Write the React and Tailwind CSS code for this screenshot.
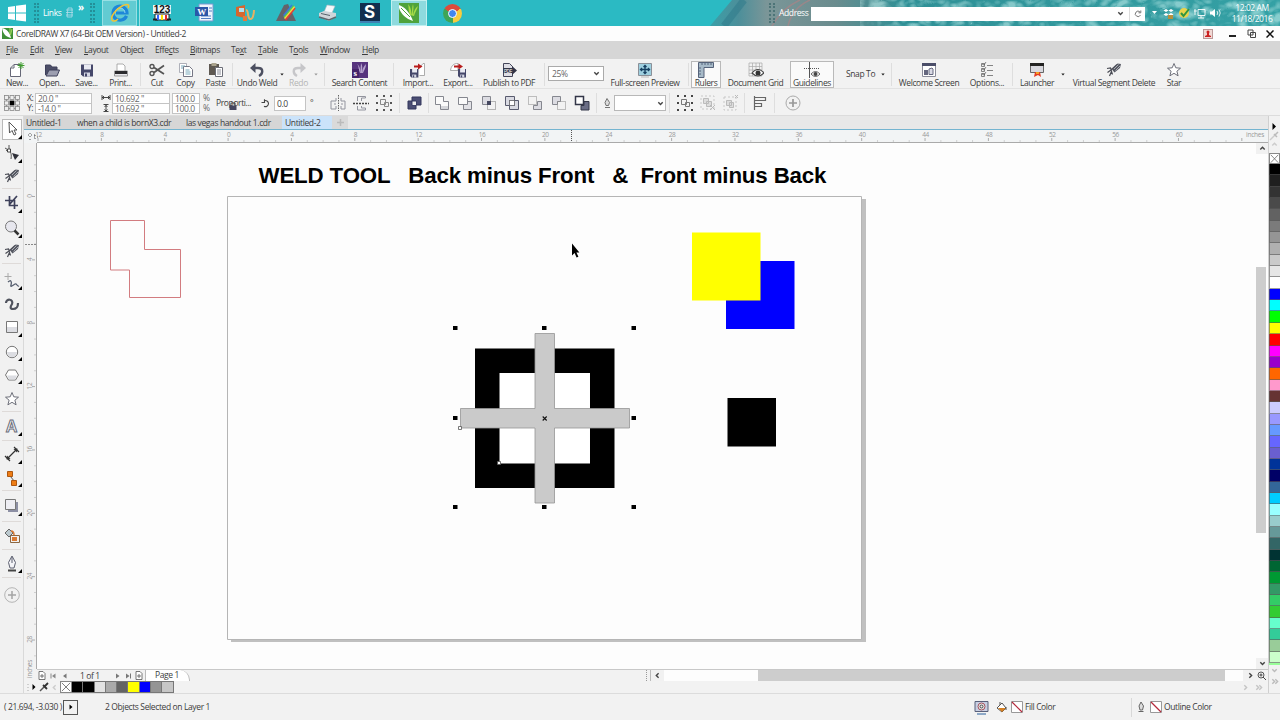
import React from "react";

const PALETTE = [
  "#000000", "#1f1f1f", "#333333", "#4a4a4a", "#626262", "#7b7b7b", "#959595", "#b0b0b0", "#cacaca", "#e6e6e6",
  "#ffffff", "#0000ff", "#00ffff", "#00ff00", "#ffff00", "#ff0000", "#ff00ff", "#9900cc", "#ff6600", "#ff99cc",
  "#663333", "#ccccff", "#9999ff", "#6699ff", "#6666ff", "#6a5fd0", "#003399", "#000066", "#336699", "#00ccff",
  "#99ffff", "#99cccc", "#669999", "#336666", "#003333", "#006633", "#009933", "#339966", "#33cc66", "#33cc33",
  "#66ffcc", "#33cc99", "#99cc99", "#ccffcc",
];

const DOC_COLORS = ["#000000", "#000000", "#e2e2e2", "#aaaaaa", "#646464", "#ffff00", "#0000ff", "#949494", "#c6c6c6"];

function Icon({ w = 16, h = 16, children, className = "" }) {
  return (
    <svg width={w} height={h} viewBox={`0 0 ${w} ${h}`} fill="none" className={"shrink-0 block " + className}>
      {children}
    </svg>
  );
}

function Sep({ className = "w-1" }) {
  return (
    <div className={"shrink-0 flex justify-center h-full py-0.5 " + className}>
      <div className="w-px bg-[#dedede]" />
    </div>
  );
}

function Tool({ label, className, active, dim, children }) {
  return (
    <div
      className={
        "shrink-0 h-[27px] flex flex-col items-center whitespace-nowrap " +
        (active ? "bg-[#fafafa] outline outline-[#b9b9b9] -outline-offset-1 " : "") +
        (dim ? "text-[#b4b4b4] " : "") +
        className
      }
    >
      <div className="h-[17px] flex items-center">{children}</div>
      <span className="leading-[10px]">{label}</span>
    </div>
  );
}

function Caret({ className = "w-1", color = "#222" }) {
  return (
    <div className={"shrink-0 flex items-center justify-center h-full " + className}>
      <Icon w={4} h={3}><path d="M.3.500h3.400L2 2.400z" fill={color} /></Icon>
    </div>
  );
}

function Chevron({ dir = "down", color = "#444", size = 7 }) {
  const paths = {
    down: "M1.300 2.300 3.500 4.600 5.700 2.300",
    up: "M1.300 4.600 3.500 2.300 5.700 4.600",
    left: "M4.600 1.300 2.300 3.500 4.600 5.700",
    right: "M2.300 1.300 4.600 3.500 2.300 5.700",
  };
  return (
    <svg width={size} height={size} viewBox="0 0 7 7" fill="none" className="block shrink-0">
      <path d={paths[dir]} stroke={color} strokeWidth="1.400" />
    </svg>
  );
}

const Knife = () => (
  <>
    <path d="M1 6.500 4.500 6l1 2.500M3.500 14l2-4.500 1 3M1.500 10.500 5 8l6-5.500" stroke="#4a4c55" strokeWidth="1.200" />
    <path d="m6 7.500 5.500-6 3.500.5-1 4-5.500 4.500z" fill="#565963" />
    <path d="m8 7 4.500-4.500M9.500 8.500 14 4" stroke="#cfd0d4" strokeWidth=".7" />
  </>
);

const Floppy = ({ x = 0, y = 0, s = 1 }) => (
  <g transform={`translate(${x} ${y}) scale(${s})`}>
    <path d="M0 0h12v12H2L0 10z" fill="#45476a" />
    <path d="M3 0h7v5H3z" fill="#e9eaf2" />
    <path d="M3 8h6v4H3z" fill="#d5d7e4" />
    <path d="M4 9h2v3H4z" fill="#45476a" />
  </g>
);

const Star = () => <path d="m8 1.500 1.800 4.300 4.700.4-3.600 3 1.200 4.600L8 11.300l-4.100 2.500 1.200-4.600-3.600-3 4.700-.4z" fill="#fff" stroke="#5e606b" strokeWidth=".9" />;

function Taskbar() {
  return (
    <div className="relative h-[26px] flex items-center bg-[#2bbac3] text-white overflow-hidden">
      <svg width="580" height="26" className="absolute right-0 top-0" fill="none">
        <defs>
          <linearGradient id="sea" x1="0" x2="1">
            <stop offset="0" stopColor="#3a9fa8" />
            <stop offset=".05" stopColor="#4c8f9a" />
            <stop offset=".1" stopColor="#7b9698" />
            <stop offset=".22" stopColor="#6a8c8e" />
            <stop offset=".34" stopColor="#2f9096" />
            <stop offset="1" stopColor="#34a1a5" />
          </linearGradient>
          <filter id="ripple" x="0" y="0" width="1" height="1">
            <feTurbulence type="turbulence" baseFrequency=".06 .09" numOctaves="2" seed="4" />
            <feColorMatrix values="0 0 0 0 .6  0 0 0 0 .9  0 0 0 0 .88  2.200 0 0 0 -.25" />
          </filter>
        </defs>
        <path d="M32 0h548v26H10z" fill="url(#sea)" />
        <rect x="160" width="420" height="26" filter="url(#ripple)" opacity=".55" />
        <path d="M44 0 24 26" stroke="#2f7a8a" strokeWidth="7" opacity=".55" />
        <path d="M88 26Q92 8 110 0M72 26Q82 8 100 0" stroke="#b87f84" strokeWidth="1.500" opacity=".55" />
      </svg>
      <div className="relative flex items-center h-full w-full">
        <div className="w-[34px] flex justify-center">
          <Icon w={18} h={18}><path d="m0 3 7-1v6.500H0zm8-1.200L18 .5v8H8zM0 9.500h7V16l-7-1zm8 0h10v8L8 16.200z" fill="#fff" /></Icon>
        </div>
        <div className="w-[5px] h-5 border-x-2 border-dotted border-[#238f98]" />
        <span className="ml-[4px] w-[22px]">Links</span>
        <Icon w={10} h={12}><path d="M3 1h4v9H2zM1 3h7M1 5.500h7M1 8h7" stroke="#b5dcea" strokeWidth=".8" /></Icon>
        <span className="ml-[3px] -mt-3 w-[12px] text-[10px] font-bold">»</span>
        <div className="w-[5px] h-5 border-x-2 border-dotted border-[#238f98]" />
        <div className="ml-[7px] w-[35px] h-[26px] bg-[#62cbd2] border border-[#98e0e4] flex items-center justify-center">
          <Icon w={20} h={20}>
            <path d="M16.500 12.800A7 7 0 1 1 17 10H6" stroke="#1e88d8" strokeWidth="3.200" />
            <path d="M5 10a5 5 0 0 1 10 0" stroke="#8ed4f6" />
            <path d="M2 17C0 14 6 6 12 3s8-1 6 2M2 17c1 2 4 1 6-1" stroke="#f3c332" strokeWidth="1.500" />
          </Icon>
        </div>
        <div className="w-[3px] h-[26px] border-r border-[#98e0e4]" />
        <div className="w-[43px] flex justify-center">
          <Icon w={20} h={20}>
            <path d="M1 2h18v9H1z" fill="#e9f4f4" />
            <text x="10" y="10" textAnchor="middle" fontSize="10" fontWeight="bold" fill="#111" letterSpacing="0" fontFamily="Liberation Sans">123</text>
            <path d="M3 11h14v6H3z" fill="#fff" stroke="#222" />
            <path d="M1 15.500h5v2H1zM14 15.500h5v2h-5z" fill="#222" />
            <path d="M5 12h2v5H5z" fill="#3465ff" /><path d="M9 12h2v5H9z" fill="#ffe100" /><path d="M13 12h2v5h-2z" fill="#e02a2a" />
          </Icon>
        </div>
        <div className="w-[41px] flex justify-center">
          <Icon w={20} h={20}>
            <path d="M5 1h14v17H5z" fill="#eef4fc" stroke="#7398cf" />
            <path d="M15 5h3M15 8h3M7 13h10M7 15.500h10" stroke="#5480c4" />
            <path d="M1 4h13v9H1z" fill="#2a57a8" />
            <text x="7.500" y="11.500" textAnchor="middle" fontSize="9" fontWeight="bold" fill="#fff" fontFamily="Liberation Serif">W</text>
          </Icon>
        </div>
        <div className="w-[41px] flex justify-center">
          <Icon w={20} h={18}>
            <path d="M1 3 10 1v13l-9-2z" fill="#d5672e" /><path d="M4 4h5v4H4z" fill="#aee0ee" />
            <path d="M11 6c3 0 1 8 4 9s4-6 4-9" stroke="#e4b064" strokeWidth="2" /><path d="M8 12h4v5H8z" fill="#e57a39" />
          </Icon>
        </div>
        <div className="w-[42px] flex justify-center">
          <Icon w={20} h={20}>
            <path d="M0 18 8 2l4-1 8 17z" fill="#64636a" />
            <path d="m9.500 17 9.500-12" stroke="#e53935" strokeWidth="1.800" /><path d="m8.500 15.500 10-12" stroke="#ffd736" strokeWidth="1.700" />
            <path d="m8 14 9.500-11.500" stroke="#4dc95f" strokeWidth="1.500" /><path d="m7.500 12.500 8.500-10.500" stroke="#3977e0" strokeWidth="1.300" />
          </Icon>
        </div>
        <div className="w-[41px] flex justify-center">
          <Icon w={20} h={18}>
            <path d="m6 8 3-7 8 1-3 7z" fill="#f5f8fa" stroke="#a8b6bd" strokeWidth=".6" />
            <path d="m1 9 5-2 12 2v4l-7 4-10-4z" fill="#cfd6da" /><path d="m1 13 10 3 7-3" stroke="#5d686e" strokeWidth="1.500" />
            <path d="m3 9.500 9 2" stroke="#56636b" />
          </Icon>
        </div>
        <div className="w-[43px] flex justify-center">
          <div className="w-5 h-5 bg-[#122f4f] border-b-2 border-[#3f81b4] flex items-center justify-center text-[17px] leading-none font-bold font-['Inter']">S</div>
        </div>
        <div className="w-[36px] h-[26px] bg-[#8edade] border border-[#c2f0f0] flex items-center justify-center">
          <Icon w={24} h={22}>
            <path d="M2 1h20v20H2z" fill="#4fa33b" />
            <path d="M13 13C11 8 12 4 11 2c3 3 3 7 4 11 0-4 0-8 1-11 1 4 0 7 0 11 1-4 2-7 5-9-1 4-3 6-4 10z" fill="#a8dc45" />
            <path d="M2 3c6 2 11 8 14 16C9 17 4 12 2 6z" fill="#fff" /><path d="m4 6 9 9" stroke="#4fa33b" />
          </Icon>
        </div>
        <div className="w-[50px] flex justify-center">
          <div className="w-[19px] h-[19px] rounded-full flex items-center justify-center bg-[conic-gradient(from_-60deg,#dd4b3b_0_120deg,#f8cc3d_120deg_240deg,#3ea557_240deg)]">
            <div className="w-[9px] h-[9px] rounded-full bg-[#4286ee] border border-white" />
          </div>
        </div>
        <div className="ml-[292px] w-[6px] h-5 border-x-2 border-dotted border-[#4d7477]" />
        <span className="ml-[4px] w-[32px]">Address</span>
        <div className="w-[334px] h-[14px] mt-px bg-white flex items-center">
          <div className="flex-1 flex justify-end pr-[5px]"><Chevron /></div>
          <div className="w-[16px] h-full border-l border-[#ddd] flex items-center justify-center">
            <Icon w={8} h={8}><path d="M6.500 5A2.700 2.700 0 1 1 6 2M6.800.5v2.300H4.500" stroke="#777" /></Icon>
          </div>
        </div>
        <div className="w-[18px] flex justify-center"><Icon w={5} h={4}><path d="M0 0h5L2.500 3z" fill="#fff" /></Icon></div>
        <Icon w={11} h={11}>
          <path d="m3 1 2.500 1.500L3 4 .5 2.500zm5 0 2.500 1.500L8 4 5.500 2.500zM3 5l2.500 1.500L3 8 .5 6.500zm5 0 2.500 1.500L8 8 5.500 6.500z" fill="#fff" />
          <path d="M5 7h5v4H5z" fill="#b5903f" />
        </Icon>
        <Icon w={12} h={12} className="ml-[4px]"><circle cx="6" cy="6" r="5" fill="#e9d34c" /><path d="m3 6 2.500 3L11 2" stroke="#2f9640" strokeWidth="2" /></Icon>
        <Icon w={12} h={11} className="ml-[4px]"><path d="M4 1.500h7v6H4zM1 1v6M0 3h3M7 8v2M4 10h6" stroke="#fff" strokeWidth=".9" /></Icon>
        <Icon w={12} h={10} className="ml-[4px]"><path d="M0 3.500h2L5 1v8L2 6.500H0z" fill="#fff" /><path d="M7 3q1.500 2 0 4M9 1.500q2.500 3.500 0 7" stroke="#fff" strokeWidth=".8" /></Icon>
        <div className="flex-1 flex flex-col items-center leading-[11px] pl-[2px] tracking-[-0.450px] whitespace-nowrap">
          <span>12:02 AM</span>
          <span>11/18/2016</span>
        </div>
      </div>
    </div>
  );
}

function TitleBar() {
  return (
    <div className="h-[15px] bg-[#fdfdfd] flex items-center pl-[2px]">
      <Icon w={11} h={11}><path d="M0 0h11v11H0z" fill="#3f8f37" /><path d="M0 0c5 1 8 5 9 10-5-1-8-4-9-10z" fill="#fff" /><path d="M8 0v6M10 1 8.500 7" stroke="#a3d85d" /></Icon>
      <span className="ml-[3px] whitespace-nowrap">CorelDRAW X7 (64-Bit OEM Version) - Untitled-2</span>
      <div className="ml-auto flex items-center pr-[6px]">
        <div className="w-[10px] h-[10px] bg-[#f1d9d5] border border-[#b99] flex items-center justify-center">
          <Icon w={6} h={7}><circle cx="3" cy="2" r="1.500" fill="#c22" /><path d="M2 3h2v2l2 1v1H0V6l2-1z" fill="#c22" /></Icon>
        </div>
        <div className="ml-[16px] mt-1 w-[7px] h-[2px] bg-[#222]" />
        <Icon w={9} h={9} className="ml-[11px]"><path d="M1 1h5v5H1zM3.500 3.500h5v5h-5z" stroke="#444" fill="#fdfdfd" /></Icon>
        <Icon w={8} h={8} className="ml-[10px]"><path d="m.5.5 7 7m0-7-7 7" stroke="#111" strokeWidth="1.500" /></Icon>
      </div>
    </div>
  );
}

const MENU = [
  ["", "F", "ile", "w-[24px]"],
  ["", "E", "dit", "w-[25px]"],
  ["", "V", "iew", "w-[29px]"],
  ["", "L", "ayout", "w-[36px]"],
  ["Ob", "j", "ect", "w-[35px]"],
  ["Effe", "c", "ts", "w-[35px]"],
  ["", "B", "itmaps", "w-[41px]"],
  ["Te", "x", "t", "w-[27px]"],
  ["", "T", "able", "w-[31px]"],
  ["T", "o", "ols", "w-[31px]"],
  ["", "W", "indow", "w-[42px]"],
  ["", "H", "elp", "w-[30px]"],
];

function MenuBar() {
  return (
    <div className="h-[18px] bg-[#d6d6d6] flex items-center pl-[6px]">
      {MENU.map(([a, b, c, w]) => (
        <span key={a + b + c} className={"shrink-0 whitespace-nowrap " + w}>
          {a}<span className="underline">{b}</span>{c}
        </span>
      ))}
    </div>
  );
}

function StandardBar() {
  return (
    <div className="h-[30px] bg-[#f2f2f2] border-b border-[#e2e2e2] flex pt-[2px]">
      <Tool label="New..." className="w-[34px]">
        <Icon w={18}><path d="M6 2.500 2.500 6v8.500h10V2.500z" fill="#fff" stroke="#666877" /><path d="M3 6h3V2.500" stroke="#666877" /><path d="M13 0v7M9.500 3.500h7M10.500 1l5 5m0-5-5 5" stroke="#3f9e2e" /></Icon>
      </Tool>
      <Tool label="Open..." className="w-[36px]">
        <Icon><path d="M1.500 13V3h5l1.500 2h5v3" fill="#4d4f68" stroke="#3e405b" /><path d="m2 14 3-6h10.500L13 14z" fill="#9c9eb0" stroke="#3e405b" /></Icon>
      </Tool>
      <Tool label="Save..." className="w-[33px]"><Icon><Floppy x={2} y={2.5} /></Icon></Tool>
      <Tool label="Print..." className="w-[35px]">
        <Icon><path d="M4 9V2h6l2 2v5" fill="#fff" stroke="#999" strokeWidth=".8" /><path d="M1.500 9h13v5h-13z" fill="#e6e6ea" stroke="#888" strokeWidth=".8" /><path d="M2 9h12v3H2z" fill="#2a2a2d" /></Icon>
      </Tool>
      <Sep className="w-[5px]" />
      <Tool label="Cut" className="w-[28px]">
        <Icon><circle cx="3" cy="4.500" r="2" stroke="#555" strokeWidth="1.400" /><circle cx="3" cy="11.500" r="2" stroke="#555" strokeWidth="1.400" /><path d="m5 5.500 10 6.500M5 10.500 15 3.500" stroke="#555" strokeWidth="1.700" /></Icon>
      </Tool>
      <Tool label="Copy" className="w-[29px]">
        <Icon><path d="M1.500 1.500h7v9h-7z" fill="#fff" stroke="#9b9da8" strokeWidth=".8" /><path d="M5.500 4.500h6l3 3v7h-9z" fill="#fff" stroke="#666877" strokeWidth=".9" /><path d="M3 4h4M3 6h2M7.500 8h4M7.500 10h5M7.500 12h5" stroke="#79a9bb" /></Icon>
      </Tool>
      <Tool label="Paste" className="w-[31px]">
        <Icon><path d="M1 2h10v11H1z" fill="#5e5851" /><path d="M3.500 1h5v3h-5z" fill="#aaa38d" /><path d="M7.500 5.500h7v9h-7z" fill="#fff" stroke="#6c6e78" /><path d="M9 8h4M9 10h4M9 12h4" stroke="#8b8d98" /></Icon>
      </Tool>
      <Sep className="w-[3px]" />
      <Tool label="Undo Weld" className="w-[46px]">
        <Icon><path d="M4 6h5c6 0 5 6 1 8" stroke="#4c4f60" strokeWidth="2.400" /><path d="m1 6 5.500-5v10z" fill="#4c4f60" /></Icon>
      </Tool>
      <Caret className="w-[4px]" />
      <Tool label="Redo" className="w-[29px]" dim>
        <Icon><path d="M12 6H7c-6 0-5 6-1 8" stroke="#c6c6c9" strokeWidth="2.400" /><path d="m15 6-5.500-5v10z" fill="#c6c6c9" /></Icon>
      </Tool>
      <Caret className="w-[5px]" color="#999" />
      <Sep className="w-[12px]" />
      <Tool label="Search Content" className="w-[59px]">
        <Icon><path d="M0 0h16v16H0z" fill="#57347e" /><path d="M8 11C6 6 7 4 5 2c3 2 3 5 4 9-1-5 0-8 0-10 2 3 1 6 1 10 0-4 2-7 4-9 0 4-2 6-3 9z" fill="#b5a2cd" /><path d="M0 7h7v9H0z" fill="#46246b" /><text x="1.500" y="14" fill="#fff" fontSize="9" fontWeight="bold" fontFamily="Liberation Serif">s</text></Icon>
      </Tool>
      <Sep className="w-[9px]" />
      <Tool label="Import..." className="w-[40px]">
        <Icon><path d="M9.500 6 13 1.500h1.500v12H9.500" fill="#fff" stroke="#999" strokeWidth=".8" /><Floppy x={0} y={7} s={0.7} /><path d="M4 4.500h5" stroke="#b81c1c" strokeWidth="2" /><path d="m8 1.500 4.500 3L8 7.500z" fill="#b81c1c" /></Icon>
      </Tool>
      <Tool label="Export..." className="w-[40px]">
        <Icon><path d="M.5 8.500C1 4 4 1 8 1.500v7z" stroke="#999" strokeWidth=".8" fill="#fff" /><path d="M4 4.500h5" stroke="#b81c1c" strokeWidth="2" /><path d="m8.500 1.500 4.500 3-4.500 3z" fill="#b81c1c" /><Floppy x={8} y={7} s={0.7} /></Icon>
      </Tool>
      <Tool label="Publish to PDF" className="w-[62px]">
        <Icon><path d="M2.500 1.500h6l3 3v10h-9z" fill="#dedee5" stroke="#44465a" /><path d="M2 6h9V4l5 4.500-5 4.500v-2H2z" fill="#333547" /><text x="3" y="10.500" fontSize="4.500" fill="#fff" fontFamily="Liberation Sans">PDF</text></Icon>
      </Tool>
      <Sep className="w-[8px]" />
      <div className="w-[56px] h-[15px] mt-[5px] shrink-0 bg-white border border-[#aaa] flex items-center justify-between px-[3px] text-[#666]">
        <span>25%</span><Chevron />
      </div>
      <Tool label="Full-screen Preview" className="w-[82px]">
        <Icon><path d="M1.500 1.500h13v12h-13z" fill="#9ecfdf" stroke="#8b9098" /><path d="M8 3v9M3.500 7.500h9M6.500 5 8 3.500 9.500 5M6.500 10 8 11.500 9.500 10M5 6 3.500 7.500 5 9M11 6l1.500 1.500L11 9" stroke="#163f60" strokeWidth="1.300" /><path d="M4 15h8" stroke="#bbb" /></Icon>
      </Tool>
      <Sep className="w-[5px]" />
      <Tool label="Rulers" className="w-[30px]" active>
        <Icon><path d="M.5.500h15v5H6v10H.500z" fill="#a7bac8" stroke="#56637a" /><path d="M4 1v2M7 1v2M10 1v2M13 1v2M1 6h2M1 9h2M1 12h2" stroke="#40506a" strokeWidth=".8" /></Icon>
      </Tool>
      <Tool label="Document Grid" className="w-[69px]">
        <Icon><path d="M1 1h13v13H1zM4.500 1v13M8 1v13M11.500 1v13M1 4.500h13M1 8h13M1 11.500h13" stroke="#aaa" strokeWidth=".7" /><path d="M4 11q6-7 12 0-6 6-12 0z" fill="#fff" stroke="#444" strokeWidth="1.100" /><circle cx="10" cy="11" r="2.500" fill="#333" /></Icon>
      </Tool>
      <Tool label="Guidelines" className="w-[44px]" active>
        <Icon><path d="M5.500 0v16" stroke="#555" /><path d="M0 6.500h16" stroke="#555" strokeDasharray="1 1" /><path d="M7 12q4.500-5 9 0-4.500 5-9 0z" fill="#fff" stroke="#555" strokeWidth=".9" /><circle cx="11.500" cy="12" r="2" fill="#444" /></Icon>
      </Tool>
      <div className="w-[56px] shrink-0 flex items-center pl-[12px] pb-px">
        <span className="w-[35px] whitespace-nowrap">Snap To</span><Caret />
      </div>
      <Sep className="w-[2px]" />
      <Tool label="Welcome Screen" className="w-[74px]">
        <Icon><path d="M1.500 1.500h13v13h-13z" fill="#fff" stroke="#8b8d9a" /><path d="M1 1h14v3H1z" fill="#4b4e69" /><path d="M3 8h4v5H3z" fill="#65687f" /><path d="M8 12.500V7q4-2 4 0v5.500z" stroke="#65687f" fill="#d9dae5" /></Icon>
      </Tool>
      <Tool label="Options..." className="w-[42px]">
        <Icon><path d="M2.500 1.500h3v3h-3zM2.500 6.500h3v3h-3zM2.500 11.500h3v3h-3zM8 3.500h6M8 8.500h6M8 13.500h6" stroke="#777" strokeWidth=".9" /><path d="m3 2 2 1 2-3M3 7l2 1 2-3M3 12l2 1 2-3" stroke="#555" strokeWidth=".7" /></Icon>
      </Tool>
      <Sep className="w-[8px]" />
      <Tool label="Launcher" className="w-[42px]">
        <Icon><path d="M1.500 1.500h13v9h-13z" fill="#d8d8de" stroke="#666" /><path d="M1 1h14v3H1z" fill="#222" /><path d="m5 15 1-5h5l1 5-3-2z" fill="#e23c24" /><path d="M7 10h3v2H7z" fill="#f4a021" /></Icon>
      </Tool>
      <Caret className="w-[9px]" />
      <Tool label="Virtual Segment Delete" className="w-[94px]"><Icon><Knife /></Icon></Tool>
      <Tool label="Star" className="w-[26px]"><Icon><Star /></Icon></Tool>
    </div>
  );
}

function Field({ children, className }) {
  return <div className={"h-[11px] bg-white border border-[#c4c4c4] px-[2px] leading-[9px] text-[#666] whitespace-nowrap " + className}>{children}</div>;
}

function PropCell({ children, className = "w-[23.4px]" }) {
  return <div className={"shrink-0 flex items-center justify-center " + className}><Icon>{children}</Icon></div>;
}

const A = "M1.500 1.500h8v8h-8z";
const B = "M6.500 6.500h8v8h-8z";

function PropertyBar() {
  return (
    <div className="h-[27px] bg-[#f2f2f2] border-b border-[#dcdcdc] flex items-center pt-[2px]">
      <div className="w-[27px] shrink-0 pl-[4px]">
        <Icon>
          <path d="M2.500 2.500h11v11h-11z" stroke="#999" />
          {[0.5, 6, 11.5].map((x) => [0.5, 6, 11.5].map((y) => (
            <rect key={x + "-" + y} x={x} y={y} width="4" height="4" fill={x === 6 && y === 6 ? "#000" : "#eee"} stroke={x === 6 && y === 6 ? "#000" : "#888"} strokeWidth=".8" />
          )))}
        </Icon>
      </div>
      <div className="w-[8px] shrink-0 leading-[10.500px]"><div>X:</div><div>Y:</div></div>
      <div className="w-[57px] shrink-0"><Field>20.0 "</Field><Field className="-mt-px">-14.0 "</Field></div>
      <div className="w-[20px] shrink-0 pl-[9px]">
        <Icon w={10} h={22}><path d="M1 3v5M9 3v5M1 5.500h8M3 4 1.500 5.500 3 7M7 4l1.500 1.500L7 7M2.500 12.500h5M2.500 19.500h5M5 13v6M3.500 15 5 13.500 6.500 15M3.500 17.500 5 19l1.500-1.500" stroke="#333" strokeWidth=".9" /></Icon>
      </div>
      <div className="w-[58px] shrink-0"><Field>10.692 "</Field><Field className="-mt-px">10.692 "</Field></div>
      <div className="w-[28px] ml-[2px] shrink-0"><Field>100.0</Field><Field className="-mt-px">100.0</Field></div>
      <div className="w-[16px] pl-[3px] shrink-0 leading-[10.500px] text-[#666]"><div>%</div><div>%</div></div>
      <div className="relative w-[45px] shrink-0">
        <Icon w={8} h={8} className="absolute left-[13px] top-[4px]"><path d="M2 4V1h4v3" stroke="#444" /><path d="M.5 3.500h7V8h-7z" fill="#44475f" /></Icon>
        <span className="relative whitespace-nowrap">Proporti...</span>
      </div>
      <div className="w-[13px] shrink-0"><Icon w={9} h={9}><path d="M3 2A3 3 0 1 1 3 7.200M3.500.3v3.200H.500" stroke="#444" strokeWidth="1.100" /></Icon></div>
      <div className="w-[32px] h-[15px] shrink-0 bg-white border border-[#c4c4c4] px-[2px] leading-[13px]">0.0</div>
      <span className="w-[20px] shrink-0 pl-[4px]">°</span>
      <PropCell>
        <path d="M8.500 0v16" stroke="#666" strokeDasharray="1.500 1" /><path d="M6 3v3H1v8h5v-3M11 3v3h4v8h-4v-3" stroke="#92949e" /><path d="M4 9h2M11 9h2" stroke="#92949e" />
      </PropCell>
      <PropCell>
        <path d="M0 8.500h16" stroke="#444" strokeDasharray="2 1" strokeWidth="1.300" /><path d="M4.500 6V1.500h8V3h-4v3M4.500 11v4h8v-2h-4v-2" stroke="#92949e" />
      </PropCell>
      <PropCell>
        <path d="M0 0h2v2H0zM7 0h2v2H7zM14 0h2v2h-2zM0 7h2v2H0zM14 7h2v2h-2zM0 14h2v2H0zM7 14h2v2H7zM14 14h2v2h-2z" fill="#555" /><path d="M4.500 4.500h5v5h-5zM8.500 7.500h4v4h-4z" stroke="#888" />
      </PropCell>
      <Sep className="w-[6px]" />
      <PropCell className="w-[24px]">
        <path d="M6 2h9v8H6zM2 6h8v8H2z" fill="#4c4f74" stroke="#33365c" /><path d="M6.500 6.500h3.500V10H6.500z" fill="#eee" />
      </PropCell>
      <Sep className="w-[4px]" />
      <PropCell>
        <path d="M1.500 1.500h8v5h5v8h-8v-5h-5z" fill="#fafafa" stroke="#85878f" /><path d="M7 11h7v3H7z" fill="#d5d6da" />
      </PropCell>
      <PropCell>
        <path d={B} fill="#e2e2e6" stroke="#85878f" /><path d="M1.500 2.500h9v7h-9z" fill="#fafafa" stroke="#85878f" />
      </PropCell>
      <PropCell>
        <path d={A} fill="#dcdce2" stroke="#85878f" /><path d={B} stroke="#777" strokeDasharray="1 1" /><path d="M6 6h4v4H6z" fill="#44475f" />
      </PropCell>
      <PropCell>
        <path d="M1.500 1.500h9v9h-9zM5.500 5.500h9v9h-9z" fill="#d9dae2" stroke="#585b6e" /><path d="M5.500 5.500h5v5h-5z" fill="#fff" stroke="#444" strokeDasharray="1 1" />
      </PropCell>
      <PropCell>
        <path d={A} stroke="#888" strokeDasharray="1 1" /><path d="M10.500 6.500h4v8h-8v-4h4z" fill="#dcdce2" stroke="#85878f" />
      </PropCell>
      <PropCell>
        <path d="M1.500 1.500h8v5h-3v3h-5z" fill="#dcdce2" stroke="#85878f" /><path d={B} stroke="#888" strokeDasharray="1 1" />
      </PropCell>
      <PropCell>
        <path d="M1.500 1.500h8v8h-8z" fill="#fff" stroke="#333648" strokeWidth="1.500" /><path d="M10 6.500h5V15H7v-4.500h3z" fill="#6a6d86" stroke="#333648" />
      </PropCell>
      <Sep className="w-[6px]" />
      <Icon w={14} h={12}><path d="M7 1.500 5 5.500l1 3h2.500l1-3zM5 10.500h5" stroke="#666" fill="#ddd" strokeWidth=".9" /></Icon>
      <div className="w-[52px] h-[16px] shrink-0 bg-white border border-[#b8b8b8] flex items-center justify-end pr-[1px]"><Chevron /></div>
      <Sep className="w-[7px]" />
      <PropCell>
        <path d="M0 0h2v2H0zM7 0h2v2H7zM14 0h2v2h-2zM0 7h2v2H0zM14 7h2v2h-2zM0 14h2v2H0zM7 14h2v2H7zM14 14h2v2h-2z" fill="#444" /><path d="M4.500 4.500h5v5h-5zM8.500 7.500h4v4h-4z" stroke="#777" />
      </PropCell>
      <PropCell>
        <path d="M1 1h13v13H1z" stroke="#c8c8c8" strokeDasharray="2 2" /><path d="M3.500 3.500h5v5h-5zM6.500 6.500h5v5h-5z" fill="#ddd" stroke="#bbb" /><path d="m10 10 5 5m0-5-5 5" stroke="#bbb" />
      </PropCell>
      <PropCell>
        <path d="M1 2h12v13H1z" stroke="#c8c8c8" strokeDasharray="2 2" /><path d="M3.500 5.500h5v5h-5zM6.500 7.500h4v5h-4z" fill="#ddd" stroke="#bbb" /><path d="m12 0 3 3m0-3-3 3" stroke="#bbb" />
      </PropCell>
      <Sep className="w-[3px]" />
      <PropCell className="w-[27px]">
        <path d="M2.500 1v14M2.500 2.500h11v3h-11M2.500 8.500h7v3h-7" stroke="#666" strokeWidth="1.200" />
      </PropCell>
      <Sep className="w-[3px]" />
      <PropCell className="w-[33px]"><circle cx="8" cy="8" r="7" stroke="#aaa" /><path d="M8 4v8M4 8h8" stroke="#999" strokeWidth="1.700" /></PropCell>
    </div>
  );
}

const TOOLBOX = [
  { h: "h-[24px]", fly: true, active: true, art: <path d="m5 1 .5 11 2.500-2.500L10 14l2-1-2-4h3z" fill="#fff" stroke="#555" /> },
  { h: "h-[24px]", fly: true, art: <><path d="M2 5.500C6 4 8 8 7 14M1 3l5 3M5 0v5" stroke="#555" /><path d="M3.500 4h3v3h-3z" fill="#fff" stroke="#444" /><path d="m8 8 7 2-4 5z" fill="#2e3038" /></> },
  { h: "h-[22px]", art: <Knife /> },
  { sep: true },
  { h: "h-[26px]", fly: true, art: <><path d="M1 5.500h9.500V14M5.500 1v9.500H14M13 1 5 10" stroke="#3d405a" strokeWidth="1.700" /></> },
  { h: "h-[24px]", fly: true, art: <><circle cx="7" cy="6.500" r="5.500" fill="#e7e7ee" stroke="#777" /><path d="m10.500 10.500 4 4" stroke="#333" strokeWidth="2.500" /></> },
  { h: "h-[22px]", art: <Knife /> },
  { sep: true },
  { h: "h-[31px]", fly: true, art: <><path d="M4 0v7M.5 3.500h7" stroke="#aaa" /><path d="M4 9c3-3 4 0 3 3s2 0 4-1 2 3 4 2" stroke="#555d6e" strokeWidth="1.300" /></> },
  { h: "h-[17px]", art: <path d="M2 6c0-5 8-4 6 1-2 3-2 5 1 5s5-1 5-6" stroke="#50535e" strokeWidth="2.200" /> },
  { h: "h-[28px]", fly: true, art: <><path d="M2.500 2.500h11v11h-11z" fill="#fff" stroke="#777" /><path d="M3 8h10v5H3z" fill="#dcdde2" /></> },
  { h: "h-[21px]", fly: true, art: <><circle cx="8" cy="8" r="5.700" fill="#fff" stroke="#777" /><path d="M3 8h10q-1 5-5 5.200Q4 13 3 8z" fill="#dcdde2" /></> },
  { h: "h-[25px]", fly: true, art: <><path d="m4.500 3-3 5 3 5h7l3-5-3-5z" fill="#fff" stroke="#777" /><path d="M3 8.500h10l-2 4H5z" fill="#dcdde2" /></> },
  { h: "h-[23px]", art: <Star /> },
  { sep: true },
  { h: "h-[26px]", fly: true, art: <text x="7.500" y="14" textAnchor="middle" fontSize="16" fontWeight="bold" fill="#fff" stroke="#6b6e7c" letterSpacing="0" fontFamily="Liberation Sans">A</text> },
  { sep: true },
  { h: "h-[24px]", fly: true, art: <><path d="m3 13 10-10M1 10l5 5M10 1l5 5" stroke="#333" strokeWidth="1.200" /><path d="m2.500 13.500.5-4 3.500 3.500zM13.500 2.500l-.5 4L9.500 3z" fill="#333" /></> },
  { h: "h-[23px]", fly: true, art: <><path d="m6 6 5 6" stroke="#555" /><path d="M3.500 1.500h5v5h-5zM7.500 10.500h5v5h-5z" fill="#ee7d15" stroke="#ad5710" /></> },
  { sep: true },
  { h: "h-[28px]", fly: true, art: <><path d="M4 4h10v10H4z" fill="#8d90a5" /><path d="M1.500 1.500h10v10h-10z" fill="#eeeef3" stroke="#777" /></> },
  { sep: true },
  { h: "h-[25px]", art: <><path d="M6.500 7.500h9v7h-9z" stroke="#8b6742" /><path d="M8 9h5v4H8z" fill="#d97a33" /><path d="m1 5 4-4 4 4-4 4z" fill="#bbc9cf" stroke="#666" /><path d="M7 3q3 0 3 4" stroke="#d97a33" strokeWidth="1.500" /></> },
  { sep: true },
  { h: "h-[25px]", fly: true, art: <><path d="M8 0 4.500 6.500 6 12h4l1.500-5.500z" fill="#f4f4f8" stroke="#5d6070" /><path d="M8 1v6" stroke="#5d6070" /><path d="M4 14.500h8" stroke="#444" strokeWidth="2" /></> },
  { sep: true },
  { h: "h-[32px]", art: <><circle cx="8" cy="8" r="7.300" stroke="#b4b4b4" /><path d="M8 4v8M4 8h8" stroke="#a4a4a4" strokeWidth="1.500" /></> },
];

function Toolbox() {
  return (
    <div className="w-[24px] shrink-0 bg-[#f1f1f1] border-r border-[#d9d9d9] flex flex-col pt-px">
      {TOOLBOX.map((t, i) =>
        t.sep ? (
          <div key={i} className="h-px my-px bg-[#dedad8] mx-[2px] shrink-0" />
        ) : (
          <div key={i} className={"shrink-0 flex items-center justify-center " + t.h}>
            <div className={"relative w-[20px] h-[21px] shrink-0 flex items-center justify-center " + (t.active ? "bg-white outline outline-[#b9b9b9] -outline-offset-1" : "")}>
              <Icon>{t.art}</Icon>
              {t.fly && <Icon w={4} h={4} className="absolute right-0 bottom-px"><path d="M4 0v4H0z" fill="#000" /></Icon>}
            </div>
          </div>
        )
      )}
    </div>
  );
}

function DocTabs() {
  return (
    <div className="h-[13px] shrink-0 bg-[#e8e8e8] flex whitespace-nowrap leading-[14px]">
      <div className="w-[51px] pl-[2px] bg-[#d6d6d6]">Untitled-1</div>
      <div className="w-[109px] pl-[2px] bg-[#d6d6d6]">when a child is bornX3.cdr</div>
      <div className="w-[98px] pl-[2px] bg-[#d6d6d6]">las vegas handout 1.cdr</div>
      <div className="w-[50px] pl-[3px] bg-[#cbe3fa]">Untitled-2</div>
      <div className="w-[16px] bg-[#dadada] flex items-center justify-center">
        <Icon w={7} h={7}><path d="M3.500 0v7M0 3.500h7" stroke="#bbb" strokeWidth="1.500" /></Icon>
      </div>
    </div>
  );
}

const UNIT = 15.84;
const H_LABELS = ["12", "8", "4", "0", "4", "8", "12", "16", "20", "24", "28", "32", "36", "40", "44", "48", "52", "56", "60"];
const V_LABELS = ["0", "4", "8", "12", "16", "20", "24", "28"];

function HRuler() {
  return (
    <svg width="1244" height="14" className="block shrink-0 bg-[#f2f4f5]" fontSize="6.500" fill="#999">
      <path d="M0 .5h1244" stroke="#74b4d0" />
      <path d="M13 13.500h1231" stroke="#aaa" />
      <path d="M4 6h9M6 4v9M10 8h5M11 6v6" stroke="#555" strokeDasharray="1 2" />
      {Array.from({ length: 77 }, (_, i) => {
        const x = 14 + i * UNIT;
        return <path key={i} d={`M${x} ${i % 4 === 0 ? 9 : 11.500}v${i % 4 === 0 ? 3 : 1}`} stroke="#999" strokeWidth=".8" />;
      })}
      {H_LABELS.map((t, i) => (
        <text key={i} x={14.500 + i * UNIT * 4} y="8" textAnchor="middle">{t}</text>
      ))}
      <path d="M547.500 1v12" stroke="#555" strokeDasharray="1 1" />
      <text x="1222" y="8" textLength="18">inches</text>
    </svg>
  );
}

function VRuler() {
  return (
    <svg width="13" height="538" className="block shrink-0 bg-[#f2f2f2]" fontSize="6.500" fill="#999">
      <path d="M12.500 0v526" stroke="#aaa" />
      {Array.from({ length: 32 }, (_, i) => {
        const y = 53.500 + (i - 2) * UNIT;
        const big = (i - 2) % 4 === 0;
        return <path key={i} d={`M${big ? 8 : 10.500} ${y}h${big ? 3 : 1}`} stroke="#999" strokeWidth=".8" />;
      })}
      {V_LABELS.map((t, i) => (
        <text key={i} transform={`translate(7.500 ${53 + i * UNIT * 4}) rotate(-90)`} textAnchor="middle">{t}</text>
      ))}
      <path d="M1 101.500h11" stroke="#888" strokeDasharray="2 1" />
      <text transform="translate(7.500 535) rotate(-90)" textLength="18">inches</text>
    </svg>
  );
}

/* artwork on the drawing page, coordinates are window pixels */
function Drawing() {
  const handles = [455, 544, 633.5].flatMap((x) => [328, 418, 507].map((y) => [x, y])).filter(([x, y]) => !(x === 544 && y === 418));
  return (
    <svg width="1219" height="526" viewBox="37 143 1219 526" fill="none" className="block">
      <path d="M862 199h4v443H231v-3h631z" fill="#c0c0c0" />
      <path d="M227.500 196.500h634v443h-634z" fill="#fdfdfd" stroke="#b5b5b5" />
      <text x="258.500" y="182.500" fontSize="22.300" fontWeight="bold" fill="#000" letterSpacing="0" fontFamily="Liberation Sans, Arial, sans-serif" textLength="568" xmlSpace="preserve" className="whitespace-pre">WELD TOOL   Back minus Front   &amp;  Front minus Back</text>
      <path d="M110.500 220.500h34v29h36v48h-51v-27.500h-19z" stroke="#d27c80" />
      <path d="M726 261h68.500v68H726z" fill="#0000ff" />
      <path d="M692 232.500h68.500v68H692z" fill="#ffff00" />
      <path d="M727.500 398h48.500v48.500h-48.500z" fill="#000" />
      <path fillRule="evenodd" d="M475 348.500h139.500v139.500h-139.500zM499.500 373h90.500v90.500h-90.500z" fill="#000" />
      <path d="M500 373.500h89.500v89.500H500z" fill="#fff" />
      <path d="M535 333.500h19.500v75h75v19.500h-75v75H535v-75h-74.500v-19.500H535z" fill="#cacaca" stroke="#969696" strokeWidth=".8" />
      {handles.map(([x, y]) => <rect key={x + "-" + y} x={x - 2} y={y - 2} width="4.500" height="4" fill="#000" />)}
      <path d="m542.700 416.500 4 4m0-4-4 4" stroke="#111" strokeWidth="1.100" />
      <path d="M458.500 426.500h3v3h-3zM497.500 461.500h3v3h-3z" fill="#fff" stroke="#555" strokeWidth=".8" />
      <path d="M572 243.500v12l2.600-2.400 2 4.400 1.800-.8-2-4.300h3z" fill="#000" />
    </svg>
  );
}

function VScroll() {
  return (
    <div className="w-[12px] h-[526px] shrink-0 bg-[#fdfdfd] flex flex-col items-center">
      <div className="w-full h-[11px] bg-[#f1f1f1] flex items-center justify-center"><Chevron dir="up" /></div>
      <div className="mt-[113px] w-[10px] h-[266px] bg-[#cdcdcd] self-start" />
      <div className="mt-auto w-full h-[11px] bg-[#f1f1f1] flex items-center justify-center"><Chevron /></div>
    </div>
  );
}

const PageIcon = () => <Icon w={8} h={9}><path d="M1 .5h4l2 2v6H1zM4 3v4M2 5h4" stroke="#555" strokeWidth=".8" fill="#fff" /></Icon>;

function PageNav() {
  return (
    <div className="h-[12px] shrink-0 flex items-center bg-[#f2f2f2] border-t border-[#c8c8c8] pl-px">
      <div className="w-[12px]"><PageIcon /></div>
      <div className="w-[12px]"><Icon w={7} h={6}><path d="M1 .5v5" stroke="#888" /><path d="M5.500.5v5L2 3z" fill="#888" /></Icon></div>
      <div className="w-[18px]"><Icon w={7} h={6}><path d="M4.500.5v5L1 3z" fill="#777" /></Icon></div>
      <span className="w-[35px] whitespace-nowrap">1 of 1</span>
      <div className="w-[10px]"><Icon w={7} h={6}><path d="M1 .5v5L4.500 3z" fill="#777" /></Icon></div>
      <div className="w-[10px]"><Icon w={7} h={6}><path d="M1 .5v5L4.500 3z" fill="#777" /><path d="M5.500.5v5" stroke="#777" /></Icon></div>
      <div className="w-[10px]"><PageIcon /></div>
      <div className="w-[45px] h-full rounded-tr-[10px] bg-white border-x border-[#bbb] pl-[9px] leading-[10px] whitespace-nowrap">Page 1</div>
      <div className="ml-auto w-[4px] h-full border-l border-dotted border-[#999]" />
      <div className="w-[604px] h-full bg-[#fdfdfd] border-l border-[#bbb] flex items-center">
        <div className="w-[13px] h-full bg-[#f1f1f1] flex items-center justify-center"><Chevron dir="left" /></div>
        <div className="ml-[94px] w-[467px] h-full bg-[#cdcdcd]" />
        <div className="ml-auto w-[11px] h-full bg-[#f1f1f1] flex items-center justify-end"><Chevron dir="right" /></div>
      </div>
      <div className="w-[14px] flex justify-center shrink-0"><Icon w={9} h={9}><circle cx="4" cy="4" r="3" stroke="#555" /><path d="m6 6 3 3M2.500 4h3M4 2.500v3" stroke="#444" /></Icon></div>
    </div>
  );
}

function None({ className }) {
  return (
    <svg viewBox="0 0 12 12" preserveAspectRatio="none" className={"block shrink-0 bg-white border border-[#888] " + className}>
      <path d="m1 1 10 10M11 1 1 11" stroke="#666" fill="none" />
    </svg>
  );
}

function DocPalette() {
  return (
    <div className="h-[12px] shrink-0 flex items-center bg-[#f2f2f2] pl-[3px]">
      <Icon w={12} h={8}><path d="M1 1v1M1 4v1M1 7v1" stroke="#aaa" /><path d="M5.500 1v6L8.500 4z" fill="#000" /></Icon>
      <Icon w={12} h={10}><path d="m1 9 5-5" stroke="#555" strokeWidth="1.500" /><path d="m4 3 4 4M6 4l3-3" stroke="#333" strokeWidth="1.800" /></Icon>
      <div className="w-[9px]"><Chevron dir="left" color="#ccc" /></div>
      <None className="w-[12px] h-[12px]" />
      {DOC_COLORS.map((c, i) => (
        <div key={i} className="w-[11.300px] h-[12px] shrink-0 border-y border-r border-[#777]" style={{ backgroundColor: c }} />
      ))}
      <div className="ml-auto flex gap-[5px] pr-[4px]">
        <Chevron dir="right" color="#c4c4c4" />
        <div className="flex -space-x-[4px]"><Chevron dir="right" color="#c4c4c4" /><Chevron dir="right" color="#c4c4c4" /></div>
      </div>
    </div>
  );
}

function ColorPalette() {
  return (
    <div className="w-[12px] shrink-0 bg-[#f2f2f2] flex flex-col items-end border-l border-[#d0d0d0]">
      <div className="h-[36.500px] shrink-0 flex flex-col items-center pt-[6px] pr-px">
        <Icon w={8} h={8}><path d="M2.500 1v7l3.500-3.500z" fill="#000" /></Icon>
        <Icon w={10} h={10} className="mt-px"><path d="m1 9 5-5" stroke="#ccc" strokeWidth="1.500" /><path d="m5 3 3 3M6 4l3-3" stroke="#bbb" strokeWidth="1.500" /></Icon>
        <Chevron dir="up" color="#ccc" />
      </div>
      <None className="w-[11px] h-[11.500px]" />
      {PALETTE.map((c, i) => (
        <div key={i} className="w-[11px] h-[11.350px] shrink-0 border-l border-b border-[#5a5a5a]/60" style={{ backgroundColor: c }} />
      ))}
      <div className="w-[11px] h-[2px] shrink-0 bg-[#99ff99]" />
      <div className="w-[11px] flex flex-col items-center pt-[2px] gap-[4px]">
        <Chevron color="#bbb" />
        <div className="flex -space-x-[4px]"><Chevron dir="right" color="#bbb" /><Chevron dir="right" color="#bbb" /></div>
      </div>
    </div>
  );
}

function NoColor() {
  return <Icon w={12} h={12}><path d="M.5.500h11v11H.500z" fill="#fff" stroke="#999" /><path d="m1 1 10 10" stroke="#b52a3c" strokeWidth="1.200" /></Icon>;
}

function StatusBar() {
  return (
    <div className="h-[27px] bg-[#f2f2f2] border-t border-[#dcdcdc] flex items-center whitespace-nowrap">
      <span className="w-[63px] pl-[4px]">( 21.694, -3.030 )</span>
      <div className="w-[15px] h-[15px] border border-[#555] flex items-center justify-center"><Icon w={4} h={6}><path d="M.5.500v5L3.500 3z" fill="#000" /></Icon></div>
      <span className="ml-[27px]">2 Objects Selected on Layer 1</span>
      <div className="ml-auto w-[306px] h-full flex items-center">
        <Icon w={15} h={15}><path d="M1 1.500h13v10H1z" fill="#c8cfe2" stroke="#59607a" /><circle cx="7.500" cy="6.500" r="3.500" stroke="#a4505a" fill="#eee" /><circle cx="7.500" cy="6.500" r="1.500" stroke="#444" /><path d="M3 14h9" stroke="#6b8fb8" strokeWidth="1.500" /></Icon>
        <Icon w={11} h={12} className="ml-[7px]"><path d="m1 7 5-5 4 5-4 4z" fill="#fff" stroke="#555" /><path d="M2 7h8l-4 4z" fill="#d68022" /><path d="M4 1v3M10 6v3" stroke="#555" /></Icon>
        <div className="ml-[4px]"><NoColor /></div>
        <span className="ml-[2px] w-[107px]">Fill Color</span>
        <div className="w-px h-[19px] bg-[#d8d8d8] -ml-px" />
        <Icon w={8} h={12} className="ml-[5px]"><path d="m4 1-2 4 1 4h2.500l1-4zM1.500 10.500h5" stroke="#666" fill="#ddd" /></Icon>
        <div className="ml-[5px]"><NoColor /></div>
        <span className="ml-[2px]">Outline Color</span>
      </div>
    </div>
  );
}

export default function App() {
  return (
    <div className="w-[1280px] h-[720px] overflow-hidden bg-[#f2f2f2] flex flex-col font-['Open_Sans','Noto_Sans',sans-serif] text-[8.500px] leading-[10px] tracking-[-0.380px] text-[#3c3c3c]">
      <Taskbar />
      <TitleBar />
      <MenuBar />
      <StandardBar />
      <PropertyBar />
      <div className="h-[577px] flex">
        <Toolbox />
        <div className="w-[1244px] shrink-0 flex flex-col">
          <DocTabs />
          <HRuler />
          <div className="h-[538px] flex">
            <VRuler />
            <div className="flex-1 min-w-0 flex flex-col">
              <div className="h-[526px] flex bg-[#fdfdfd]">
                <Drawing />
                <VScroll />
              </div>
              <PageNav />
            </div>
          </div>
          <DocPalette />
        </div>
        <ColorPalette />
      </div>
      <StatusBar />
    </div>
  );
}
